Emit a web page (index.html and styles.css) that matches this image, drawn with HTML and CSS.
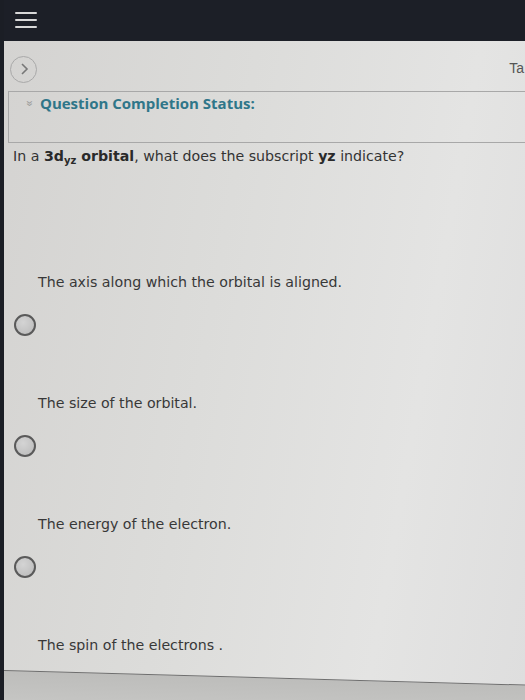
FILE: index.html
```html
<!DOCTYPE html>
<html>
<head>
<meta charset="utf-8">
<link rel="stylesheet" href="styles.css">
</head>
<body>
<div class="screen">
  <header class="topbar">
    <div class="burger"><span></span><span></span><span></span></div>
  </header>
  <main class="page">
    <div class="toolrow">
      <div class="nextbtn">
        <svg width="12" height="14" viewBox="0 0 12 14"><path d="M4 2 L9 7 L4 12" fill="none" stroke="#777" stroke-width="1.6"/></svg>
      </div>
      <span class="ta">Ta</span>
    </div>
    <section class="status">
      <div class="status-title"><span class="dbl">&#x00BB;</span>Question Completion Status:</div>
    </section>
    <p class="question">In a <b>3d<sub>yz</sub> orbital</b>, what does the subscript <b>yz</b> indicate?</p>
    <ul class="options">
      <li class="opt"><div class="opt-text">The axis along which the orbital is aligned.</div><span class="radio"></span></li>
      <li class="opt"><div class="opt-text">The size of the orbital.</div><span class="radio"></span></li>
      <li class="opt"><div class="opt-text">The energy of the electron.</div><span class="radio"></span></li>
      <li class="opt last"><div class="opt-text">The spin of the electrons .</div></li>
    </ul>
    <div class="bottomline"></div>
  </main>
</div>
</body>
</html>
```
FILE: styles.css
```css
html, body { margin: 0; padding: 0; }
body { width: 525px; height: 700px; overflow: hidden; background: #1b1e25; font-family: "DejaVu Sans", Verdana, sans-serif; }
.screen { display: flex; flex-direction: column; height: 700px; border-left: 4px solid #1b1e25; box-sizing: border-box; }
.topbar { height: 41px; background: #1c1f27; flex: none; display: flex; align-items: center; padding-left: 11px; }
.burger { display: flex; flex-direction: column; gap: 5px; width: 22px; margin-top: -2px; }
.burger span { display: block; height: 2px; background: #d8d8d8; border-radius: 1px; }
.page { flex: 1; position: relative; overflow: hidden; background: linear-gradient(100deg, #d4d3d1 0%, #dcdcda 40%, #e4e4e3 75%, #dedede 100%); display: flex; flex-direction: column; }
.toolrow { height: 50px; display: flex; align-items: center; justify-content: space-between; padding: 0 0 0 6px; }
.nextbtn { width: 27px; height: 27px; border: 1px solid #a9a9a9; border-radius: 50%; display: flex; align-items: center; justify-content: center; box-sizing: border-box; margin-top: 6px; }
.ta { font-family: "Liberation Sans", Arial, sans-serif; font-size: 14px; color: #555; margin-right: 1px; margin-top: 4px; }
.status { margin-left: 4px; height: 52px; border: 1px solid #a8a8a8; border-right: none; box-sizing: border-box; flex: none; }
.status-title { font-family: "Open Sans", sans-serif; font-weight: 700; font-size: 15px; color: #2f7689; padding: 1px 0 0 19px; display: flex; align-items: center; }
.dbl { display: inline-block; transform: rotate(90deg); color: #999; font-size: 12px; margin-right: 6px; font-weight: 400; }
.question { margin: 5px 0 0 9px; font-size: 14.2px; color: #333; }
.question b { color: #2a2a2a; }
.question sub { font-size: 10px; vertical-align: -3px; line-height: 0; }
.options { list-style: none; margin: 0; padding: 0; }
.opt { position: relative; height: 121px; }
.opt.last { height: 60px; }
.opt:first-child { margin-top: 100px; }
.opt-text { font-size: 14.2px; color: #383838; margin-left: 34px; padding-top: 10px; }
.radio { position: absolute; left: 10px; top: 50px; width: 18px; height: 18px; border: 2px solid #5a5a5a; border-radius: 50%; background: radial-gradient(circle at 40% 35%, #d4d4d4, #b9b9b9); }
.bottomline { position: absolute; left: 0; right: 0; top: 629px; height: 40px; border-top: 1px solid #6e6e6e; background: linear-gradient(180deg, #bdbdbb, #c8c8c6); transform: skewY(1.6deg); transform-origin: left top; }
```
